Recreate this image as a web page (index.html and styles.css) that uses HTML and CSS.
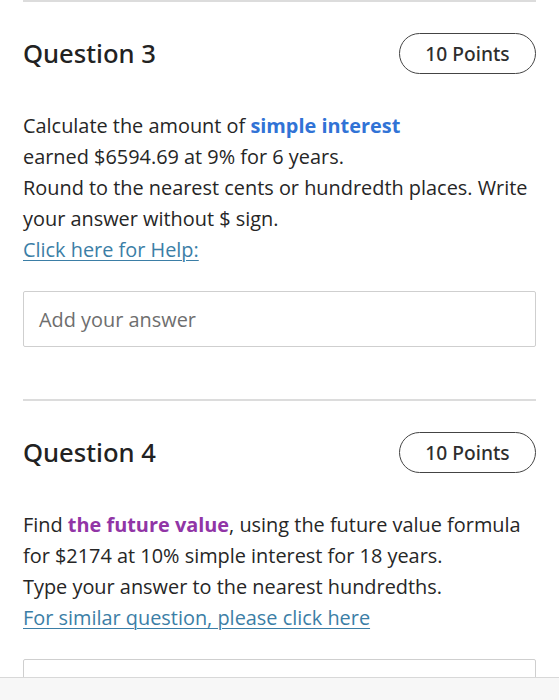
FILE: index.html
```html
<!DOCTYPE html>
<html>
<head>
<meta charset="utf-8">
<link rel="stylesheet" href="styles.css">
</head>
<body>
<main class="page">
  <section class="question">
    <div class="q-head">
      <h2 class="q-title">Question 3</h2>
      <span class="points">10 Points</span>
    </div>
    <div class="q-body">
      <p>Calculate the amount of <strong class="blue">simple interest</strong><br>earned $6594.69 at 9% for 6 years.<br>Round to the nearest cents or hundredth places. Write your answer without $ sign.<br><a class="link" href="#">Click here for Help:</a></p>
    </div>
    <div class="answer">Add your answer</div>
  </section>
  <section class="question">
    <div class="q-head">
      <h2 class="q-title">Question 4</h2>
      <span class="points">10 Points</span>
    </div>
    <div class="q-body">
      <p>Find <strong class="purple">the future value</strong>, using the future value formula for $2174 at 10% simple interest for 18 years.<br>Type your answer to the nearest hundredths.<br><a class="link" href="#">For similar question, please click here</a></p>
    </div>
    <div class="answer"></div>
  </section>
</main>
<div class="bottom-bar"></div>
</body>
</html>
```

FILE: styles.css
```css
html, body {
  margin: 0;
  padding: 0;
  background: #ffffff;
}
body {
  font-family: "Open Sans", "Noto Sans", sans-serif;
  color: #262626;
}
.page {
  padding: 0 23px 0 23px;
}
.question {
  border-top: 2px solid #dcdcdc;
  padding-top: 31px;
  padding-bottom: 52px;
}
.q-head {
  display: flex;
  justify-content: space-between;
  align-items: center;
}
.q-title {
  margin: 0;
  font-family: "Noto Sans", "Open Sans", sans-serif;
  font-size: 25.6px;
  font-weight: 500;
  line-height: 41px;
  color: #222;
}
.points {
  box-sizing: border-box;
  height: 41px;
  width: 137px;
  display: flex;
  align-items: center;
  justify-content: center;
  border: 1.5px solid #444;
  border-radius: 21px;
  font-family: "Noto Sans", "Open Sans", sans-serif;
  font-size: 19.2px;
  font-weight: 500;
  color: #2e2e2e;
}
.q-body {
  margin-top: 36px;
}
.q-body p {
  margin: 0;
  font-size: 19.9px;
  line-height: 31px;
  color: #262626;
}
.blue {
  color: #3173d6;
  font-weight: 700;
}
.purple {
  color: #9135a6;
  font-weight: 700;
}
.link {
  color: #3b7ea6;
  text-decoration: underline;
  text-underline-offset: 3px;
  text-decoration-thickness: 1px;
}
.answer {
  box-sizing: border-box;
  margin-top: 26px;
  height: 56px;
  border: 1px solid #cfcfcf;
  border-radius: 2px;
  padding: 0 15px;
  display: flex;
  align-items: center;
  font-size: 19.9px;
  color: #6e6e6e;
}
.bottom-bar {
  position: fixed;
  left: 0;
  right: 0;
  bottom: 0;
  height: 22px;
  background: #f7f7f7;
  border-top: 1px solid #d8d8d8;
}
```
